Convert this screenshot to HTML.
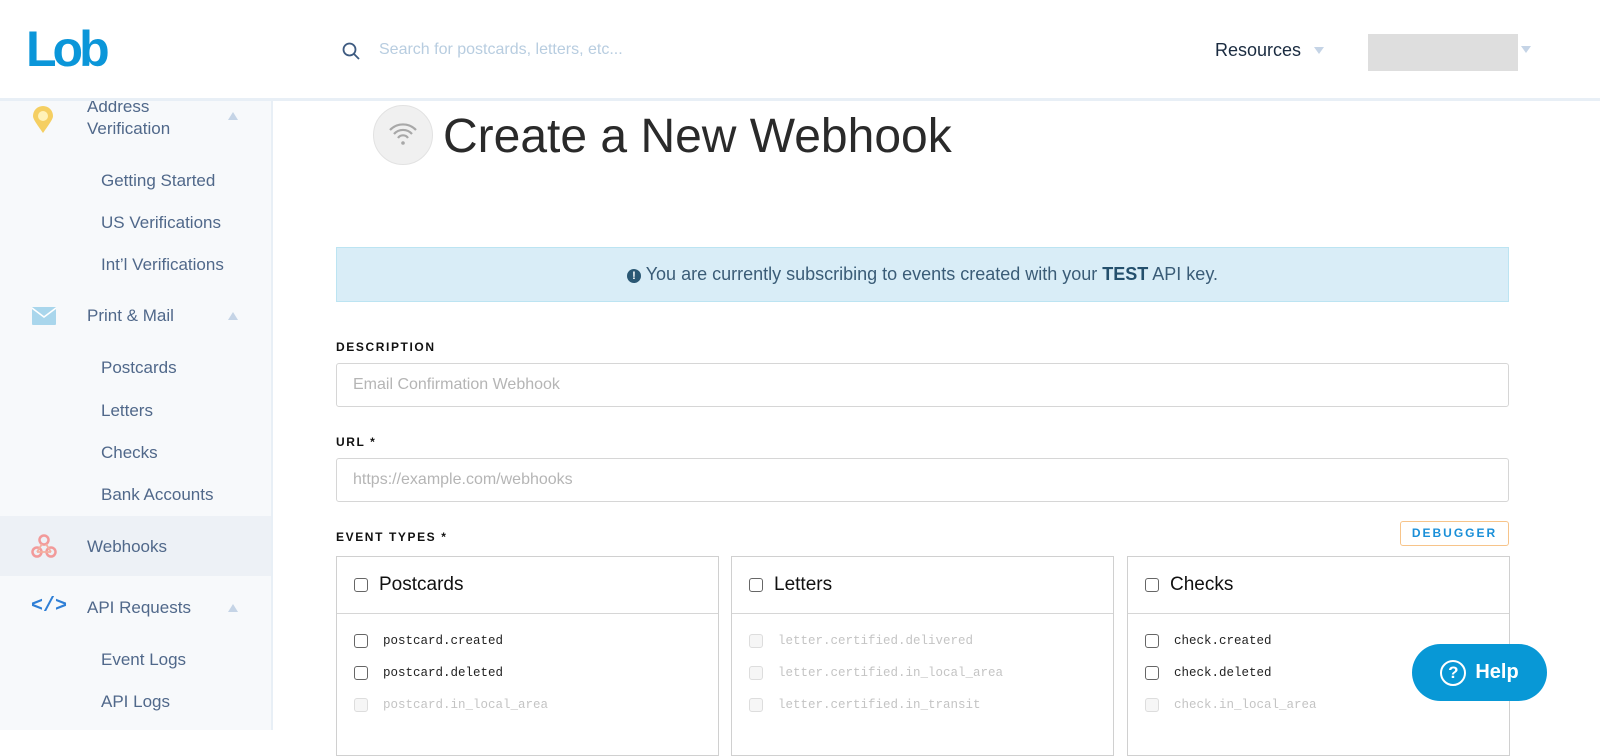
<!DOCTYPE html>
<html><head><meta charset="utf-8"><style>
*{box-sizing:border-box;margin:0;padding:0}
body{width:1600px;height:730px;overflow:hidden;background:#fff;font-family:"Liberation Sans",sans-serif;position:relative}
.abs{position:absolute}
.hdr{left:0;top:0;width:1600px;height:101px;background:#fff;border-bottom:3px solid #e8eff6;z-index:3}
.side{left:0;top:101px;width:273px;height:629px;background:#f7f9fb;border-right:2px solid #e8eff6}
.si{position:absolute;left:87px;font-size:17px;color:#50688a;line-height:20px}
.sub{left:101px}
.tri{position:absolute;left:228px;width:0;height:0;border-left:5px solid transparent;border-right:5px solid transparent;border-bottom:8px solid #c5d4e6}
.lbl{position:absolute;left:336px;font-size:12px;font-weight:bold;letter-spacing:1.6px;color:#111}
.inp{position:absolute;left:336px;width:1173px;height:44px;border:1px solid #d6d6d6;border-radius:3px;padding-left:16px;line-height:42px;font-size:16px;color:#b5b5b5}
.box{position:absolute;top:556px;width:383px;height:200px;border:1px solid #d0d0d0}
.bh{height:57px;border-bottom:1px solid #d6d6d6;padding-left:17px;display:flex;align-items:center;font-size:19px;color:#111}
.cb{display:inline-block;width:14px;height:14px;border:1.5px solid #666;border-radius:3px;margin-right:11px}
.it{position:absolute;left:17px;font-family:"Liberation Mono",monospace;font-size:12.5px;color:#222;display:flex;align-items:center}
.it .cb{margin-right:15px}
.dis{color:#c4c4c4}.dis .cb{border-color:#ddd;background:#f6f6f6}
</style></head><body>
<div class="abs hdr">
  <div class="abs" style="left:26px;top:24px;font-size:50px;font-weight:bold;color:#0b96d9;letter-spacing:-4px;line-height:50px">Lob</div>
  <svg class="abs" style="left:342px;top:42px" width="18" height="18" viewBox="0 0 18 18"><circle cx="7.5" cy="7.5" r="6" fill="none" stroke="#3d5a80" stroke-width="1.8"/><path d="M12 12l5 5" stroke="#3d5a80" stroke-width="1.8"/></svg>
  <div class="abs" style="left:379px;top:41px;font-size:16px;color:#b8cde0">Search for postcards, letters, etc...</div>
  <div class="abs" style="left:1215px;top:40px;font-size:18px;color:#1a2b40">Resources</div>
  <div class="abs" style="left:1314px;top:47px;border-left:5px solid transparent;border-right:5px solid transparent;border-top:7px solid #c5d4e6"></div>
  <div class="abs" style="left:1368px;top:34px;width:150px;height:37px;background:#dedede"></div>
  <div class="abs" style="left:1521px;top:46px;border-left:5px solid transparent;border-right:5px solid transparent;border-top:7px solid #c5d4e6"></div>
</div>
<div class="abs side">
  <svg class="abs" style="left:32px;top:5px" width="22" height="28" viewBox="0 0 22 28"><path d="M11 27C4 17 1 13 1 10a10 10 0 0 1 20 0c0 3-3 7-10 17z" fill="#f5cf62"/><circle cx="11" cy="10" r="5" fill="#fff2b8"/></svg>
  <div class="si" style="top:-4px">Address</div>
  <div class="si" style="top:18px">Verification</div>
  <div class="tri" style="top:11px"></div>
  <div class="si sub" style="top:70px">Getting Started</div>
  <div class="si sub" style="top:112px">US Verifications</div>
  <div class="si sub" style="top:154px">Int’l Verifications</div>
  <svg class="abs" style="left:32px;top:206px" width="24" height="18" viewBox="0 0 24 18"><rect width="24" height="18" rx="1" fill="#a9d6ec"/><path d="M0 1l12 9 12-9" fill="none" stroke="#fff" stroke-width="1.5"/></svg>
  <div class="si" style="top:205px">Print &amp; Mail</div>
  <div class="tri" style="top:211px"></div>
  <div class="si sub" style="top:257px">Postcards</div>
  <div class="si sub" style="top:300px">Letters</div>
  <div class="si sub" style="top:342px">Checks</div>
  <div class="si sub" style="top:384px">Bank Accounts</div>
  <div class="abs" style="left:0;top:415px;width:271px;height:60px;background:#edf1f6"></div>
  <svg class="abs" style="left:31px;top:432px" width="26" height="26" viewBox="0 0 26 26" fill="none" stroke="#f29a9a" stroke-width="2.5"><circle cx="13" cy="7" r="4.5"/><circle cx="6" cy="19" r="4.5"/><circle cx="20" cy="19" r="4.5"/><path d="M11 11l-5 8M6 19h14M15 11l5 8" stroke="#f4b0a0" stroke-width="1.8"/></svg>
  <div class="si" style="top:436px">Webhooks</div>
  <div class="abs" style="left:31px;top:494px;font-size:20px;font-weight:bold;color:#2f7fd6;font-family:'Liberation Mono',monospace">&lt;/&gt;</div>
  <div class="si" style="top:497px">API Requests</div>
  <div class="tri" style="top:503px"></div>
  <div class="si sub" style="top:549px">Event Logs</div>
  <div class="si sub" style="top:591px">API Logs</div>
</div>
<div class="abs" style="left:373px;top:105px;width:60px;height:60px;border-radius:50%;background:#f0f0f0;border:1px solid #e2e2e2"></div>
<svg class="abs" style="left:387px;top:120px" width="32" height="30" viewBox="0 0 32 30" fill="none" stroke="#a8a8a8" stroke-width="2.2"><path d="M3 10a18 18 0 0 1 26 0M7 14a12 12 0 0 1 18 0M11 18a6 6 0 0 1 10 0"/><circle cx="16" cy="23" r="1.8" fill="#a8a8a8" stroke="none"/></svg>
<div class="abs" style="left:443px;top:109px;font-size:48px;color:#2a2a2a;font-weight:300">Create a New Webhook</div>
<div class="abs" style="left:336px;top:247px;width:1173px;height:55px;background:#d9edf7;border:1px solid #bce4f2;text-align:center;line-height:53px;font-size:18px;color:#3a5c77">
<span style="display:inline-block;width:14px;height:14px;border-radius:50%;background:#2b5874;color:#fff;font-size:11px;line-height:14px;font-weight:bold;vertical-align:1px">!</span> You are currently subscribing to events created with your <b style="color:#24506d">TEST</b> API key.</div>
<div class="lbl" style="top:340px">DESCRIPTION</div>
<div class="inp" style="top:363px">Email Confirmation Webhook</div>
<div class="lbl" style="top:435px">URL *</div>
<div class="inp" style="top:458px">https://example.com/webhooks</div>
<div class="lbl" style="top:530px">EVENT TYPES *</div>
<div class="abs" style="left:1400px;top:521px;width:109px;height:25px;border:1px solid #f7c48a;border-radius:3px;text-align:center;line-height:23px;font-size:12px;font-weight:bold;letter-spacing:2px;color:#1a8fd8">DEBUGGER</div>
<div class="box" style="left:336px"><div class="bh"><span class="cb"></span>Postcards</div>
<div class="it" style="top:77px"><span class="cb"></span>postcard.created</div>
<div class="it" style="top:109px"><span class="cb"></span>postcard.deleted</div>
<div class="it dis" style="top:141px"><span class="cb"></span>postcard.in_local_area</div></div>
<div class="box" style="left:731px"><div class="bh"><span class="cb"></span>Letters</div>
<div class="it dis" style="top:77px"><span class="cb"></span>letter.certified.delivered</div>
<div class="it dis" style="top:109px"><span class="cb"></span>letter.certified.in_local_area</div>
<div class="it dis" style="top:141px"><span class="cb"></span>letter.certified.in_transit</div></div>
<div class="box" style="left:1127px;width:383px"><div class="bh"><span class="cb"></span>Checks</div>
<div class="it" style="top:77px"><span class="cb"></span>check.created</div>
<div class="it" style="top:109px"><span class="cb"></span>check.deleted</div>
<div class="it dis" style="top:141px"><span class="cb"></span>check.in_local_area</div></div>
<div class="abs" style="left:1412px;top:644px;width:135px;height:57px;border-radius:29px;background:#0898d6;color:#fff;font-size:20px;font-weight:bold;display:flex;align-items:center;justify-content:center">
<span style="display:inline-block;width:26px;height:26px;border:2.5px solid #fff;border-radius:50%;text-align:center;line-height:21px;font-size:17px;margin-right:9px">?</span>Help</div>
</body></html>
